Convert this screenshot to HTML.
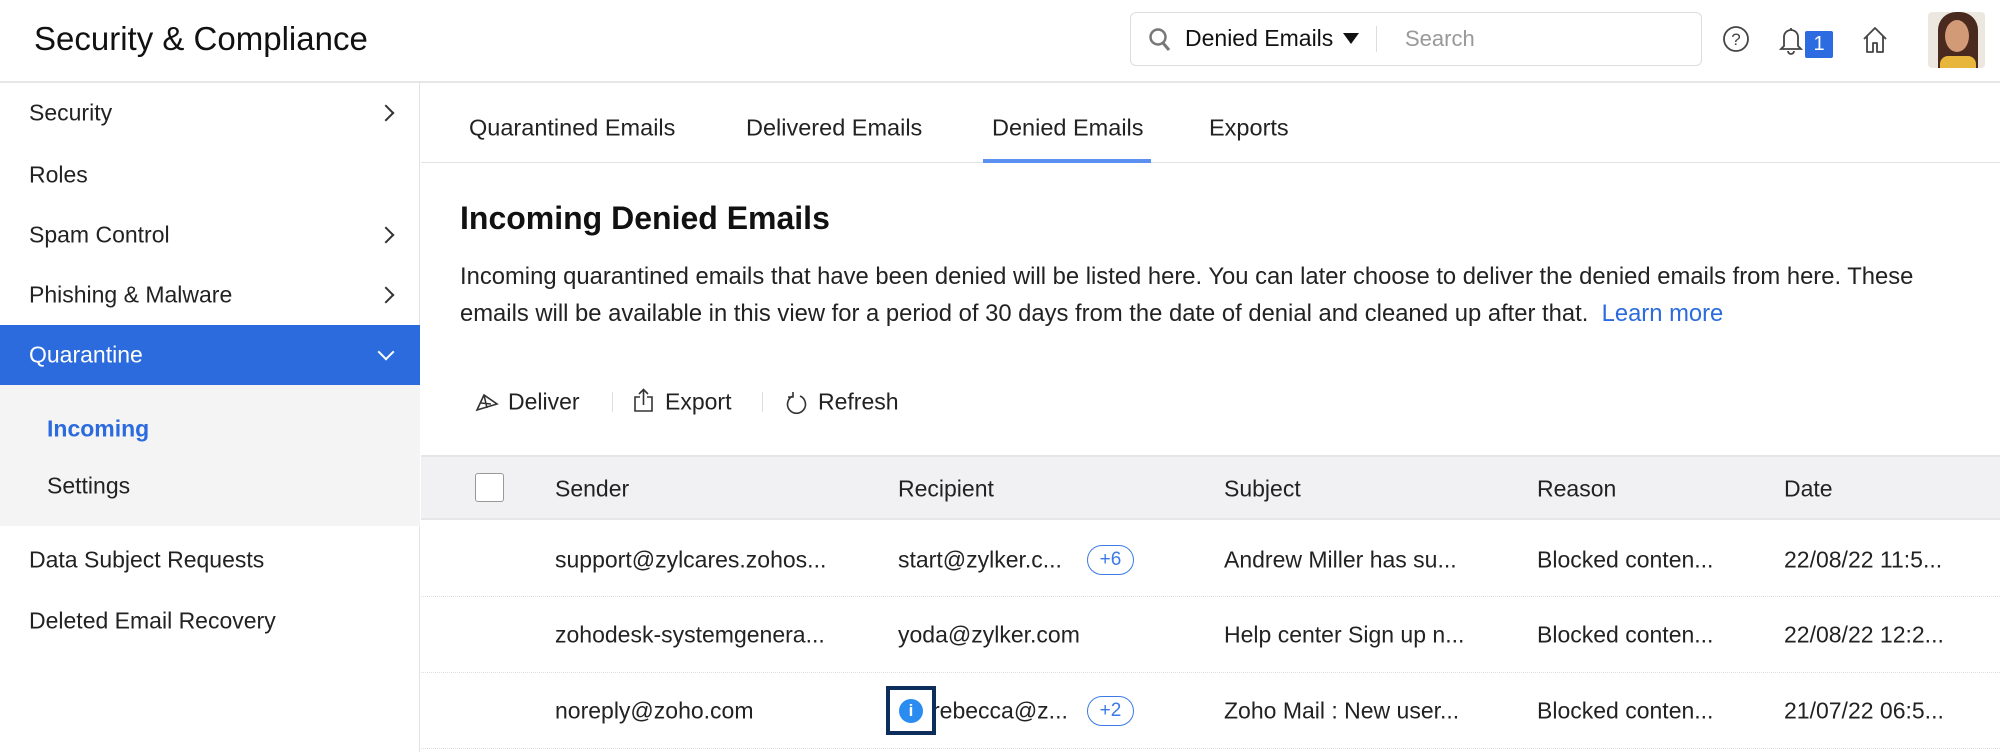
<!DOCTYPE html>
<html><head><meta charset="utf-8"><style>
*{box-sizing:border-box;margin:0;padding:0}
body{width:2000px;height:752px;overflow:hidden;background:#fff;font-family:"Liberation Sans",sans-serif;color:#222;position:relative}
.a{position:absolute;white-space:nowrap}
.side{position:absolute;left:0;top:82px;width:420px;height:670px;border-right:1px solid #e2e2e2}
.si{position:absolute;left:29px;font-size:23px;color:#222;transform:translateY(-50%)}
.chev{position:absolute;left:380px;width:12px;height:12px;border-right:2px solid #333;border-top:2px solid #333;transform:translateY(-50%) rotate(45deg)}
.tab{position:absolute;top:128px;font-size:23.5px;transform:translateY(-50%);color:#222}
.td{position:absolute;font-size:23px;transform:translateY(-50%);color:#222}
.pill{position:absolute;width:47px;height:30px;border:1.5px solid #3b7ae6;border-radius:15px;color:#3b7ae6;font-size:19px;text-align:center;line-height:27px;transform:translateY(-50%)}
</style></head><body>
<div class="a" style="left:34px;top:20px;font-size:33px;color:#111">Security &amp; Compliance</div>
<div class="a" style="left:0;top:81px;width:2000px;height:2px;background:#e6e6e6"></div>
<div class="a" style="left:1130px;top:12px;width:572px;height:54px;border:1.5px solid #ddd;border-radius:6px"></div>
<svg class="a" style="left:1148px;top:27px" width="24" height="26" viewBox="0 0 24 26"><circle cx="10" cy="10" r="7.5" fill="none" stroke="#777" stroke-width="2.5"/><path d="M15 16l6 7" stroke="#777" stroke-width="3"/></svg>
<div class="a" style="left:1185px;top:25px;font-size:23px;color:#111">Denied Emails</div>
<div class="a" style="left:1343px;top:33px;border-left:8px solid transparent;border-right:8px solid transparent;border-top:11px solid #111"></div>
<div class="a" style="left:1376px;top:26px;width:1px;height:26px;background:#ddd"></div>
<div class="a" style="left:1405px;top:26px;font-size:22px;color:#999">Search</div>
<svg class="a" style="left:1722px;top:25px" width="28" height="28"><circle cx="14" cy="14" r="12" fill="none" stroke="#444" stroke-width="1.8"/><text x="14" y="20" text-anchor="middle" font-size="17" font-family="Liberation Sans" fill="#444">?</text></svg>
<svg class="a" style="left:1776px;top:24px" width="30" height="32"><path d="M8 22V13a7 7 0 0 1 14 0v9l3 3H5z M15 4v2 M12 27a3 3 0 0 0 6 0" fill="none" stroke="#444" stroke-width="1.8"/></svg>
<div class="a" style="left:1805px;top:31px;width:28px;height:27px;background:#2c6ce0;color:#fff;font-size:20px;text-align:center;line-height:27px;border-radius:2px">1</div>
<svg class="a" style="left:1860px;top:24px" width="30" height="32"><path d="M4 15L15 4l11 11M7 12v16h6v-9h4v9h6V12" fill="none" stroke="#444" stroke-width="1.8" stroke-linejoin="round"/></svg>
<div class="a" style="left:1928px;top:12px;width:57px;height:56px;border-radius:4px;overflow:hidden;background:#ece8e0">
<div class="a" style="left:10px;top:0;width:40px;height:56px;border-radius:18px 18px 0 0;background:#4a2a1e"></div>
<div class="a" style="left:17px;top:8px;width:24px;height:32px;border-radius:50%;background:#d29a76"></div>
<div class="a" style="left:12px;top:44px;width:36px;height:14px;border-radius:8px 8px 0 0;background:#e8b63a"></div>
</div>

<div class="side">
<div class="si" style="top:31px">Security</div><div class="chev" style="top:31px"></div>
<div class="si" style="top:93px">Roles</div>
<div class="si" style="top:153px">Spam Control</div><div class="chev" style="top:153px"></div>
<div class="si" style="top:213px">Phishing &amp; Malware</div><div class="chev" style="top:213px"></div>
<div class="a" style="left:0;top:243px;width:420px;height:60px;background:#2b6bdd"></div>
<div class="si" style="top:273px;color:#fff">Quarantine</div>
<div class="a" style="left:380px;top:264px;width:12px;height:12px;border-right:2px solid #fff;border-bottom:2px solid #fff;transform:rotate(45deg)"></div>
<div class="a" style="left:0;top:303px;width:420px;height:141px;background:#f4f4f5"></div>
<div class="si" style="top:347px;left:47px;color:#2b6bdd;font-weight:bold">Incoming</div>
<div class="si" style="top:404px;left:47px">Settings</div>
<div class="si" style="top:478px">Data Subject Requests</div>
<div class="si" style="top:539px">Deleted Email Recovery</div>
</div>

<div class="tab" style="left:469px">Quarantined Emails</div>
<div class="tab" style="left:746px">Delivered Emails</div>
<div class="tab" style="left:992px">Denied Emails</div>
<div class="tab" style="left:1209px">Exports</div>
<div class="a" style="left:421px;top:162px;width:1579px;height:1px;background:#e2e2e2"></div>
<div class="a" style="left:983px;top:159px;width:168px;height:4px;background:#5b8ff0"></div>

<div class="a" style="left:460px;top:200px;font-size:32px;font-weight:bold;color:#111">Incoming Denied Emails</div>
<div class="a" style="left:460px;top:258px;font-size:23.8px;line-height:37px;color:#222">Incoming quarantined emails that have been denied will be listed here. You can later choose to deliver the denied emails from here. These<br>emails will be available in this view for a period of 30 days from the date of denial and cleaned up after that.&nbsp; <span style="color:#2b6bdd">Learn more</span></div>

<svg class="a" style="left:475px;top:391px" width="24" height="22"><path d="M2 19L9 4l13 9zM9 4l3 13M6 12l10 1" fill="none" stroke="#333" stroke-width="1.6"/></svg>
<div class="td" style="left:508px;top:402px">Deliver</div>
<div class="a" style="left:612px;top:392px;width:1px;height:20px;background:#ddd"></div>
<svg class="a" style="left:632px;top:387px" width="24" height="26"><path d="M8 10H3v14h17V10h-5M11.5 18V3M7 7l4.5-4.5L16 7" fill="none" stroke="#333" stroke-width="1.6"/></svg>
<div class="td" style="left:665px;top:402px">Export</div>
<div class="a" style="left:762px;top:392px;width:1px;height:20px;background:#ddd"></div>
<svg class="a" style="left:785px;top:390px" width="24" height="26"><path d="M8 6a9 9 0 1 0 7 0M8 2v5H3" fill="none" stroke="#333" stroke-width="1.6"/></svg>
<div class="td" style="left:818px;top:402px">Refresh</div>

<div class="a" style="left:421px;top:455px;width:1579px;height:65px;background:#f1f1f3;border-top:2px solid #e6e6e6;border-bottom:2px solid #e6e6e6"></div>
<div class="a" style="left:475px;top:473px;width:29px;height:29px;border:1.5px solid #999;border-radius:3px;background:#fff"></div>
<div class="td" style="left:555px;top:489px">Sender</div>
<div class="td" style="left:898px;top:489px">Recipient</div>
<div class="td" style="left:1224px;top:489px">Subject</div>
<div class="td" style="left:1537px;top:489px">Reason</div>
<div class="td" style="left:1784px;top:489px">Date</div>

<div class="a" style="left:421px;top:596px;width:1579px;border-top:1.5px dotted #ddd"></div>
<div class="a" style="left:421px;top:672px;width:1579px;border-top:1.5px dotted #ddd"></div>
<div class="a" style="left:421px;top:748px;width:1579px;border-top:1.5px dotted #ddd"></div>

<div class="td" style="left:555px;top:560px">support@zylcares.zohos...</div>
<div class="td" style="left:898px;top:560px">start@zylker.c...</div>
<div class="pill" style="left:1087px;top:560px">+6</div>
<div class="td" style="left:1224px;top:560px">Andrew Miller has su...</div>
<div class="td" style="left:1537px;top:560px">Blocked conten...</div>
<div class="td" style="left:1784px;top:560px">22/08/22 11:5...</div>

<div class="td" style="left:555px;top:635px">zohodesk-systemgenera...</div>
<div class="td" style="left:898px;top:635px">yoda@zylker.com</div>
<div class="td" style="left:1224px;top:635px">Help center Sign up n...</div>
<div class="td" style="left:1537px;top:635px">Blocked conten...</div>
<div class="td" style="left:1784px;top:635px">22/08/22 12:2...</div>

<div class="td" style="left:555px;top:711px">noreply@zoho.com</div>
<div class="td" style="left:932px;top:711px">rebecca@z...</div>
<div class="a" style="left:886px;top:686px;width:50px;height:49px;border:4px solid #0d2e5c;background:#fff"></div>
<div class="a" style="left:899px;top:699px;width:24px;height:24px;border-radius:50%;background:#2a8cf0;color:#fff;font-size:17px;font-weight:bold;text-align:center;line-height:24px">i</div>
<div class="pill" style="left:1087px;top:711px">+2</div>
<div class="td" style="left:1224px;top:711px">Zoho Mail : New user...</div>
<div class="td" style="left:1537px;top:711px">Blocked conten...</div>
<div class="td" style="left:1784px;top:711px">21/07/22 06:5...</div>
</body></html>
